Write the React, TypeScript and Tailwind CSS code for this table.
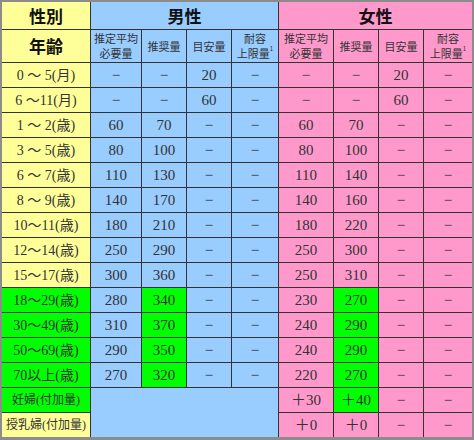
import React from "react";

const Y = "bg-[#ffff99]";
const B = "bg-[#99ccff]";
const P = "bg-[#ff99cc]";
const G = "bg-[#00ff00]";

type Row = { label: string; m: string[]; f: string[] };

const D = "−";

const rows: Row[] = [
  { label: "0 ～ 5(月)", m: [D, D, "20", D], f: [D, D, "20", D] },
  { label: "6 ～11(月)", m: [D, D, "60", D], f: [D, D, "60", D] },
  { label: "1 ～ 2(歳)", m: ["60", "70", D, D], f: ["60", "70", D, D] },
  { label: "3 ～ 5(歳)", m: ["80", "100", D, D], f: ["80", "100", D, D] },
  { label: "6 ～ 7(歳)", m: ["110", "130", D, D], f: ["110", "140", D, D] },
  { label: "8 ～ 9(歳)", m: ["140", "170", D, D], f: ["140", "160", D, D] },
  { label: "10～11(歳)", m: ["180", "210", D, D], f: ["180", "220", D, D] },
  { label: "12～14(歳)", m: ["250", "290", D, D], f: ["250", "300", D, D] },
  { label: "15～17(歳)", m: ["300", "360", D, D], f: ["250", "310", D, D] },
  { label: "18～29(歳)", m: ["280", "340", D, D], f: ["230", "270", D, D] },
  { label: "30～49(歳)", m: ["310", "370", D, D], f: ["240", "290", D, D] },
  { label: "50～69(歳)", m: ["290", "350", D, D], f: ["240", "290", D, D] },
  { label: "70以上(歳)", m: ["270", "320", D, D], f: ["220", "270", D, D] },
];

const serif = "font-['Liberation_Serif','Noto_Sans_CJK_JP',serif]";
const gothic = "font-['Noto_Sans_CJK_JP','Noto_Sans',sans-serif]";

function C({ bg, children, cls = "" }: { bg: string; children?: React.ReactNode; cls?: string }) {
  return (
    <div className={`${bg} flex items-center justify-center text-center whitespace-nowrap ${cls}`}>{children}</div>
  );
}

function Sub({ bg, l1, l2, sup }: { bg: string; l1: string; l2?: string; sup?: boolean }) {
  return (
    <div className={`${bg} flex flex-col items-center justify-center text-center ${gothic} text-[11px] text-[#333]`}>
      <div className="leading-[15px] h-[15px]">{l1}</div>
      {l2 && (
        <div className="leading-[15px] h-[15px]">
          {l2}
          {sup && <span className="text-[6px] align-top leading-[6px]">1</span>}
        </div>
      )}
    </div>
  );
}

export default function App() {
  return (
    <div className="w-[474px] h-[440px] border-t-2 border-l-2 border-r-2 border-b-[3px] border-[#8c8c8c] bg-[#333333]">
      <div className="grid gap-px bg-[#333333] grid-cols-[88px_50px_44px_44px_46px_54px_44px_44px_48px] grid-rows-[27px_32px_repeat(14,24px)_24px]">
        <C bg={Y} cls={`${gothic} font-bold text-[17px] text-[#111]`}>性別</C>
        <C bg={B} cls={`${gothic} font-bold text-[17px] text-[#111] col-span-4`}>男性</C>
        <C bg={P} cls={`${gothic} font-bold text-[17px] text-[#111] col-span-4`}>女性</C>

        <C bg={Y} cls={`${gothic} font-bold text-[17px] text-[#111]`}>年齢</C>
        <Sub bg={B} l1="推定平均" l2="必要量" />
        <Sub bg={B} l1="推奨量" />
        <Sub bg={B} l1="目安量" />
        <Sub bg={B} l1="耐容" l2="上限量" sup />
        <Sub bg={P} l1="推定平均" l2="必要量" />
        <Sub bg={P} l1="推奨量" />
        <Sub bg={P} l1="目安量" />
        <Sub bg={P} l1="耐容" l2="上限量" sup />

        {rows.map((r, i) => {
          const g = i >= 9;
          return (
            <React.Fragment key={r.label}>
              <C bg={g ? G : Y} cls={`${serif} text-[14px] text-[#333]`}>{r.label}</C>
              {r.m.map((v, j) => (
                <C key={"m" + j} bg={g && j === 1 ? G : B} cls={`${serif} text-[15px] text-[#333]`}>
                  {v}
                </C>
              ))}
              {r.f.map((v, j) => (
                <C key={"f" + j} bg={g && j === 1 ? G : P} cls={`${serif} text-[15px] text-[#333]`}>
                  {v}
                </C>
              ))}
            </React.Fragment>
          );
        })}

        <C bg={G} cls={`${serif} text-[12px] text-[#333]`}>妊婦(付加量)</C>
        <div className={`${B} col-span-4 row-span-2`} />
        <C bg={P} cls={`${serif} text-[15px] text-[#333]`}>＋30</C>
        <C bg={G} cls={`${serif} text-[15px] text-[#333]`}>＋40</C>
        <C bg={P} cls={`${serif} text-[15px] text-[#333]`}>{D}</C>
        <C bg={P} cls={`${serif} text-[15px] text-[#333]`}>{D}</C>

        <C bg={Y} cls={`${serif} text-[12px] text-[#333]`}>授乳婦(付加量)</C>
        <C bg={P} cls={`${serif} text-[15px] text-[#333]`}>＋0</C>
        <C bg={P} cls={`${serif} text-[15px] text-[#333]`}>＋0</C>
        <C bg={P} cls={`${serif} text-[15px] text-[#333]`}>{D}</C>
        <C bg={P} cls={`${serif} text-[15px] text-[#333]`}>{D}</C>
      </div>
    </div>
  );
}
